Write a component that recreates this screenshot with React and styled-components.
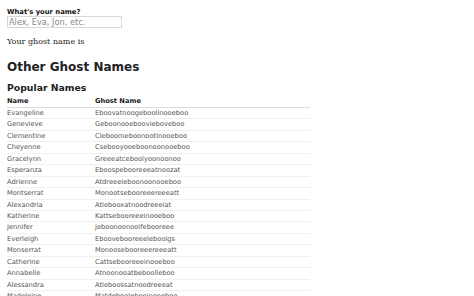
import React from 'react'
import styled, { createGlobalStyle } from 'styled-components'

const Global = createGlobalStyle`
  body {
    margin: 0;
    background: #fff;
    font-family: "DejaVu Sans", sans-serif;
    color: #222;
  }
`

const Page = styled.div`
  padding: 8px 7px 0 7px;
`

const Label = styled.label`
  display: block;
  font-size: 6.8px;
  font-weight: bold;
  color: #111;
  line-height: 8px;
`

const Input = styled.input`
  display: block;
  width: 115px;
  height: 12px;
  margin-top: 0;
  box-sizing: border-box;
  border: 1px solid #d8d8d8;
  padding: 0 1px;
  font-family: "DejaVu Sans", sans-serif;
  font-size: 8.2px;
  outline: none;
  &::placeholder {
    color: #888;
  }
`

const Result = styled.p`
  font-family: "DejaVu Serif", serif;
  font-size: 8px;
  color: #222;
  margin: 9px 0 0 0;
  line-height: 10px;
`

const Title = styled.h1`
  font-size: 12px;
  font-weight: bold;
  margin: 13px 0 0 0;
  line-height: 14px;
  color: #222;
`

const Subtitle = styled.h2`
  font-size: 9.3px;
  font-weight: bold;
  margin: 8px 0 0 0;
  line-height: 12px;
  color: #222;
`

const Table = styled.table`
  width: 303px;
  margin-top: 2px;
  border-collapse: collapse;
  font-size: 6.7px;
`

const Th = styled.th`
  text-align: left;
  font-weight: bold;
  color: #222;
  padding: 0;
  line-height: 11px;
  border-bottom: 1px solid #ddd;
  width: ${p => p.$w || 'auto'};
`

const Td = styled.td`
  color: #555;
  padding: 0;
  line-height: 10.44px;
  border-bottom: 1px solid #f0f0f0;
`

const names = [
  ['Evangeline', 'Eboovatnoogeboolinooeboo'],
  ['Genevieve', 'Geboonooeboovieboooveboo'.replace('ooov', 'ov')],
  ['Clementine', 'Cleboomeboonootinooeboo'],
  ['Cheyenne', 'Csebooyooeboonoonooeboo'],
  ['Gracelynn', 'Greeeatceboolyoonoonoo'],
  ['Esperanza', 'Eboospebooreeeatnoozat'],
  ['Adrienne', 'Atdreeeieboonoonooeboo'],
  ['Montserrat', 'Monootsebooreeereeeatt'],
  ['Alexandria', 'Atlebooxatnoodreeeiat'],
  ['Katherine', 'Kattsebooreeeinooeboo'],
  ['Jennifer', 'Jeboonoonooifebooreee'],
  ['Everleigh', 'Eboovebooreeelebooigs'],
  ['Monserrat', 'Monoosebooreeereeeatt'],
  ['Catherine', 'Cattsebooreeeinooeboo'],
  ['Annabelle', 'Atnoonooatbeboolleboo'],
  ['Alessandra', 'Atleboossatnoodreeeat'],
  ['Madeleine', 'Matdeboolebooinooeboo'],
]

export default function App() {
  return (
    <Page>
      <Global />
      <Label htmlFor="name">What's your name?</Label>
      <Input id="name" placeholder="Alex, Eva, Jon, etc." />
      <Result>Your ghost name is</Result>
      <Title>Other Ghost Names</Title>
      <Subtitle>Popular Names</Subtitle>
      <Table>
        <thead>
          <tr>
            <Th $w="88px">Name</Th>
            <Th>Ghost Name</Th>
          </tr>
        </thead>
        <tbody>
          {names.map(([n, g]) => (
            <tr key={n}>
              <Td>{n}</Td>
              <Td>{g}</Td>
            </tr>
          ))}
        </tbody>
      </Table>
    </Page>
  )
}
